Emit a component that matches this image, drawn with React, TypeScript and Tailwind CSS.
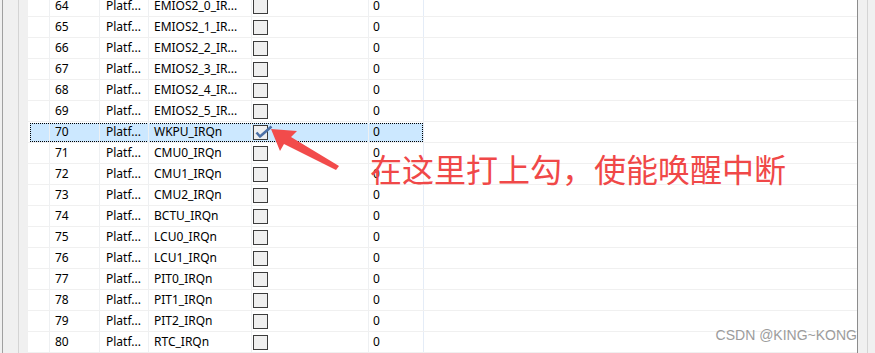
const rows = [
  { id: 64, name: 'EMIOS2_0_IR...' },
  { id: 65, name: 'EMIOS2_1_IR...' },
  { id: 66, name: 'EMIOS2_2_IR...' },
  { id: 67, name: 'EMIOS2_3_IR...' },
  { id: 68, name: 'EMIOS2_4_IR...' },
  { id: 69, name: 'EMIOS2_5_IR...' },
  { id: 70, name: 'WKPU_IRQn', checked: true },
  { id: 71, name: 'CMU0_IRQn' },
  { id: 72, name: 'CMU1_IRQn' },
  { id: 73, name: 'CMU2_IRQn' },
  { id: 74, name: 'BCTU_IRQn' },
  { id: 75, name: 'LCU0_IRQn' },
  { id: 76, name: 'LCU1_IRQn' },
  { id: 77, name: 'PIT0_IRQn' },
  { id: 78, name: 'PIT1_IRQn' },
  { id: 79, name: 'PIT2_IRQn' },
  { id: 80, name: 'RTC_IRQn' },
];

function CheckBox({ checked }: { checked?: boolean }) {
  return (
    <div className="relative w-[15px] h-[15px] border border-[#3c3c3c] bg-[#efefef]">
      {checked && (
        <svg className="absolute left-0 top-0 overflow-visible" width="15" height="15" viewBox="0 0 15 15">
          <path d="M2.5 6.5 L6 10.5 L17.5 0.5" fill="none" stroke="#4c70a6" strokeWidth="2.6" strokeLinejoin="round" />
        </svg>
      )}
    </div>
  );
}

export default function App() {
  return (
    <div
      className="relative w-[875px] h-[353px] overflow-hidden bg-white flex text-[12px] text-black"
      style={{ fontFamily: '"Noto Sans", "Noto Sans CJK SC", sans-serif' }}
    >
      {/* left gutter */}
      <div className="flex h-full shrink-0">
        <div className="w-[2px] bg-[#f0f0f0]" />
        <div className="w-px bg-[#a0a0a0]" />
        <div className="w-[15px] bg-[#f0f0f0]" />
        <div className="w-px bg-[#d4d4d4]" />
        <div className="w-[9px] bg-[#f0f0f0]" />
      </div>

      {/* table */}
      <div className="flex-1 flex flex-col mt-[-4px]">
        {rows.map((r) => (
          <div key={r.id} className="relative flex h-[21px] shrink-0 border-b border-[#f0f0f0]">
            {r.checked && (
              <div className="absolute left-[2px] top-[1px] w-[393px] h-[19px] bg-[#cce8ff] border border-dotted border-black" />
            )}
            <div className="relative w-[22px] border-r border-[#eef0f2]" />
            <div className="relative w-[50px] pl-[5px] flex items-center border-r border-[#eef0f2]">{r.id}</div>
            <div className="relative w-[49px] pl-[6px] flex items-center border-r border-[#eef0f2]">Platf...</div>
            <div className="relative w-[103px] pl-[5px] flex items-center border-r border-[#eef0f2]">{r.name}</div>
            <div className="relative w-[117px] pl-px flex items-center border-r border-[#eef0f2]">
              <CheckBox checked={r.checked} />
            </div>
            <div className="relative w-[55px] pl-[4px] flex items-center border-r border-[#e4ecf7]">0</div>
            <div className="flex-1" />
          </div>
        ))}
      </div>

      {/* right gutter */}
      <div className="flex h-full shrink-0">
        <div className="w-px bg-[#8c8c8c]" />
        <div className="w-[9px] bg-[#f0f0f0]" />
        <div className="w-px bg-[#d4d4d4]" />
        <div className="w-[7px] bg-[#f0f0f0]" />
      </div>

      {/* annotation arrow */}
      <svg className="absolute left-0 top-0 pointer-events-none" width="875" height="353">
        <polygon
          points="271,129 297,131 291,137 339,166 336,170 284,144 280,151"
          fill="#f24b4b"
        />
      </svg>

      {/* annotation text */}
      <div
        className="absolute left-[370px] top-[152px] text-[32px] leading-none text-[#f04848] whitespace-nowrap"
        style={{ fontFamily: '"Noto Sans CJK SC", sans-serif' }}
      >
        在这里打上勾，使能唤醒中断
      </div>

      {/* watermark */}
      <div
        className="absolute right-[18px] top-[328px] text-[14px] leading-none text-[#9c9c9c]"
        style={{ fontFamily: '"Liberation Sans", Arial, sans-serif' }}
      >
        CSDN @KING~KONG
      </div>
    </div>
  );
}
